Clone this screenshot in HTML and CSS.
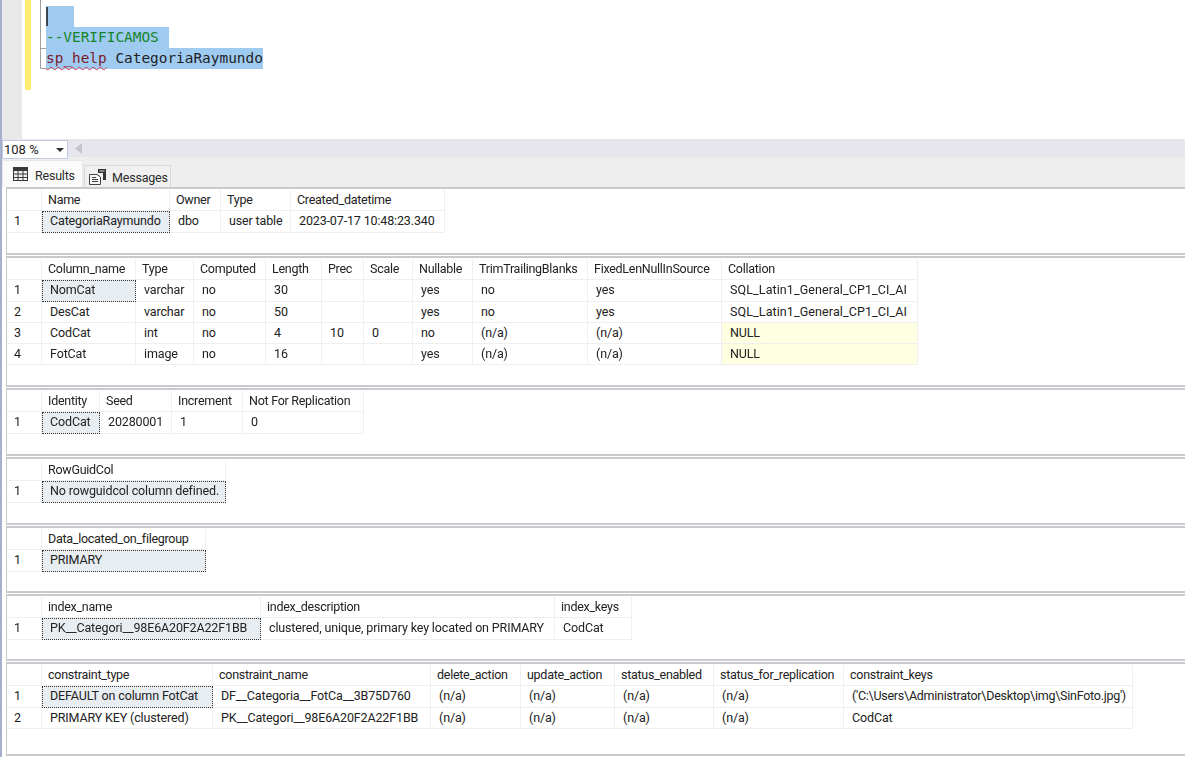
FILE: index.html
```html
<!DOCTYPE html>
<html lang="es">
<head>
<meta charset="utf-8">
<title>sp_help CategoriaRaymundo</title>
<link rel="stylesheet" href="styles.css">
</head>
<body>
<div class="page">
  <section class="editor">
    <div class="gutter"></div>
    <div class="changebar"></div>
    <svg class="outline" width="6" height="70" viewBox="0 0 6 70"><path d="M.5 0V68.5H6M.5 48.5H6" fill="none" stroke="#a0a0a0"/></svg>
    <div class="code">
      <div class="line sel-1"><span class="caret"></span></div>
      <div class="line"><span class="comment">--VERIFICAMOS</span><span class="pad"></span></div>
      <div class="line"><span class="keyword">sp_help</span> CategoriaRaymundo</div>
    </div>
  </section>

  <div class="zoombar">
    <div class="combo"><span>108 %</span><svg width="8" height="4" viewBox="0 0 8 4"><path d="M0 0H8L4 4Z" fill="#333"/></svg></div>
    <svg class="scroll-left" width="7" height="11" viewBox="0 0 7 11"><path d="M7 0V11L0 5.5Z" fill="#c4c6cc"/></svg>
  </div>

  <div class="tabs">
    <div class="tab active">
      <svg width="15" height="14" viewBox="0 0 15 14"><path d="M0 0H15V14H0Z" fill="#3a3a3a"/><path d="M1 4H4.5V6.5H1ZM5.5 4H9.5V6.5H5.5ZM10.5 4H14V6.5H10.5ZM1 7.5H4.5V10H1ZM5.5 7.5H9.5V10H5.5ZM10.5 7.5H14V10H10.5ZM1 11H4.5V13H1ZM5.5 11H9.5V13H5.5ZM10.5 11H14V13H10.5Z" fill="#f2f2f2"/></svg>
      <span>Results</span>
    </div>
    <div class="tab">
      <svg width="17" height="16" viewBox="0 0 17 16"><path d="M9 0H17V11H14V4H9Z" fill="#333"/><path d="M10.5 1.5H15.5V2.5H10.5Z" fill="#ddd"/><path d="M.5 5.5H8L11.5 8V15.5H.5Z" fill="#f6f6f6" stroke="#444"/><path d="M3 8.5H7M3 10.5H9M3 12.5H9" stroke="#444"/></svg>
      <span>Messages</span>
    </div>
  </div>

  <main class="results">
    <section class="pane pane-1"><div class="grid cols-1">
      <div class="cell head"></div><div class="cell head">Name</div><div class="cell head">Owner</div><div class="cell head">Type</div><div class="cell head">Created_datetime</div>
      <div class="cell num">1</div><div class="cell focus">CategoriaRaymundo</div><div class="cell">dbo</div><div class="cell">user table</div><div class="cell">2023-07-17 10:48:23.340</div>
    </div></section>

    <section class="pane pane-2"><div class="grid cols-2">
      <div class="cell head"></div><div class="cell head">Column_name</div><div class="cell head">Type</div><div class="cell head">Computed</div><div class="cell head">Length</div><div class="cell head">Prec</div><div class="cell head">Scale</div><div class="cell head">Nullable</div><div class="cell head">TrimTrailingBlanks</div><div class="cell head">FixedLenNullInSource</div><div class="cell head">Collation</div>
      <div class="cell num">1</div><div class="cell focus">NomCat</div><div class="cell">varchar</div><div class="cell">no</div><div class="cell">30</div><div class="cell"></div><div class="cell"></div><div class="cell">yes</div><div class="cell">no</div><div class="cell">yes</div><div class="cell wide">SQL_Latin1_General_CP1_CI_AI</div>
      <div class="cell num">2</div><div class="cell">DesCat</div><div class="cell">varchar</div><div class="cell">no</div><div class="cell">50</div><div class="cell"></div><div class="cell"></div><div class="cell">yes</div><div class="cell">no</div><div class="cell">yes</div><div class="cell wide">SQL_Latin1_General_CP1_CI_AI</div>
      <div class="cell num">3</div><div class="cell">CodCat</div><div class="cell">int</div><div class="cell">no</div><div class="cell">4</div><div class="cell">10</div><div class="cell">0</div><div class="cell">no</div><div class="cell">(n/a)</div><div class="cell">(n/a)</div><div class="cell null">NULL</div>
      <div class="cell num">4</div><div class="cell">FotCat</div><div class="cell">image</div><div class="cell">no</div><div class="cell">16</div><div class="cell"></div><div class="cell"></div><div class="cell">yes</div><div class="cell">(n/a)</div><div class="cell">(n/a)</div><div class="cell null">NULL</div>
    </div></section>

    <section class="pane pane-3"><div class="grid cols-3">
      <div class="cell head"></div><div class="cell head">Identity</div><div class="cell head">Seed</div><div class="cell head">Increment</div><div class="cell head">Not For Replication</div>
      <div class="cell num">1</div><div class="cell focus">CodCat</div><div class="cell">20280001</div><div class="cell">1</div><div class="cell">0</div>
    </div></section>

    <section class="pane pane-4"><div class="grid cols-4">
      <div class="cell head"></div><div class="cell head">RowGuidCol</div>
      <div class="cell num">1</div><div class="cell focus">No rowguidcol column defined.</div>
    </div></section>

    <section class="pane pane-5"><div class="grid cols-5">
      <div class="cell head"></div><div class="cell head">Data_located_on_filegroup</div>
      <div class="cell num">1</div><div class="cell focus">PRIMARY</div>
    </div></section>

    <section class="pane pane-6"><div class="grid cols-6">
      <div class="cell head"></div><div class="cell head">index_name</div><div class="cell head">index_description</div><div class="cell head">index_keys</div>
      <div class="cell num">1</div><div class="cell focus">PK__Categori__98E6A20F2A22F1BB</div><div class="cell">clustered, unique, primary key located on PRIMARY</div><div class="cell">CodCat</div>
    </div></section>

    <section class="pane pane-7"><div class="grid cols-7">
      <div class="cell head"></div><div class="cell head">constraint_type</div><div class="cell head">constraint_name</div><div class="cell head">delete_action</div><div class="cell head">update_action</div><div class="cell head">status_enabled</div><div class="cell head">status_for_replication</div><div class="cell head">constraint_keys</div>
      <div class="cell num">1</div><div class="cell focus">DEFAULT on column FotCat</div><div class="cell">DF__Categoria__FotCa__3B75D760</div><div class="cell">(n/a)</div><div class="cell">(n/a)</div><div class="cell">(n/a)</div><div class="cell">(n/a)</div><div class="cell tight">('C:\Users\Administrator\Desktop\img\SinFoto.jpg')</div>
      <div class="cell num">2</div><div class="cell">PRIMARY KEY (clustered)</div><div class="cell">PK__Categori__98E6A20F2A22F1BB</div><div class="cell">(n/a)</div><div class="cell">(n/a)</div><div class="cell">(n/a)</div><div class="cell">(n/a)</div><div class="cell">CodCat</div>
    </div></section>
  </main>
</div>
</body>
</html>
```
FILE: styles.css
```css
* { box-sizing: border-box; }
html, body { margin: 0; padding: 0; background: #fff; }
body { width: 1185px; height: 757px; overflow: hidden; }

.page {
  width: 1185px;
  height: 757px;
  overflow: hidden;
  border-left: 2px solid #a6b0cc;
  font-family: Roboto, "Open Sans", sans-serif;
  font-size: 12.5px;
  color: #222;
  filter: blur(0.3px);
}

/* Query editor */
.editor { display: flex; align-items: flex-start; height: 139px; background: #fff; }
.gutter { width: 20px; height: 100%; background: #e8e8e8; }
.changebar { width: 6px; height: 90px; margin-left: 3px; background: #ffec6e; }
.outline { margin-left: 9px; flex: none; }
.code {
  margin: 6px 0 0 0;
  font-family: "DejaVu Sans Mono", "Liberation Mono", monospace;
  font-size: 14.42px;
  line-height: 21px;
  color: #1e1e1e;
}
.line { width: max-content; height: 21px; background: #a0cbf1; white-space: pre; }
.sel-1 { width: 28px; padding-top: 1px; }
.caret { display: block; width: 2px; height: 19px; background: #3c4650; }
.comment { color: #15852b; }
.pad { display: inline-block; width: 10px; }
.keyword { color: #7d1a2a; text-decoration: underline wavy #d0384a 1px; text-underline-offset: 3px; }

/* Zoom strip */
.zoombar { display: flex; align-items: flex-start; gap: 7px; height: 18px; background: #e6e6ec; }
.combo {
  display: flex;
  align-items: center;
  justify-content: space-between;
  width: 66px;
  height: 19px;
  margin-top: 1px;
  padding: 0 3px 0 1px;
  background: #fff;
  border: 1px solid #c2cbdf;
  font-size: 13px;
  color: #222;
}
.scroll-left { margin: 4px 0 0 0; }

/* Tabs */
.tabs {
  display: flex;
  align-items: flex-end;
  gap: 1px;
  height: 30px;
  padding-top: 3px;
  background: #eeeeee;
}
.tab {
  display: flex;
  align-items: center;
  gap: 6px;
  width: 87px;
  height: 22px;
  padding-left: 4px;
  background: #f0f0f0;
  border: 1px solid #d8d8d8;
  border-bottom: 0;
  color: #2b2b2b;
  letter-spacing: -0.2px;
}
.tab svg { flex: none; }
.tab span { padding-top: 2px; }
.tab.active {
  gap: 7px;
  width: 81px;
  height: 27px;
  padding-left: 10px;
  background: #fbfbfb;
  border-color: #e6e6e6;
}

/* Result panes */
.results { display: flex; flex-direction: column; padding-left: 4px; gap: 1px; }
.pane {
  background: #fff;
  padding-top: 1px;
  border: 2px solid #c9c9ce;
  border-width: 2px 0 2px 1px;
  width: 1179px;
}
.pane-1 { height: 68px; }
.pane-2 { height: 131px; }
.pane-3 { height: 68px; }
.pane-4 { height: 68px; }
.pane-5 { height: 67px; }
.pane-6 { height: 67px; }
.pane-7 { height: 94px; }

.grid { display: grid; grid-auto-rows: 21.25px; width: max-content; }
.cols-1 { grid-template-columns: 35px 128px 51px 70px 154px; }
.cols-2 { grid-template-columns: 35px 94px 58px 72px 56px 42px 49px 60px 115px 134px 196px; }
.cols-3 { grid-template-columns: 35px 58px 72px 71px 121px; }
.cols-4 { grid-template-columns: 35px 184px; }
.cols-5 { grid-template-columns: 35px 164px; }
.cols-6 { grid-template-columns: 35px 219px 294px 77px; }
.cols-7 { grid-template-columns: 35px 171px 218px 90px 94px 99px 130px 289px; }

.cell {
  padding: 0 0 0 8px;
  line-height: 20px;
  white-space: nowrap;
  overflow: hidden;
  background: #fff;
  border-right: 1px solid #efefef;
  border-bottom: 1px solid #efefef;
  letter-spacing: -0.14px;
}
.head { padding-left: 6px; letter-spacing: -0.27px; }
.num { padding-left: 7px; }
.wide { letter-spacing: 0.1px; }
.tight { letter-spacing: -0.26px; }
.focus { background: #e8edf2; outline: 1px dotted #333; outline-offset: -1px; }
.null { background: #ffffe1; }
```
